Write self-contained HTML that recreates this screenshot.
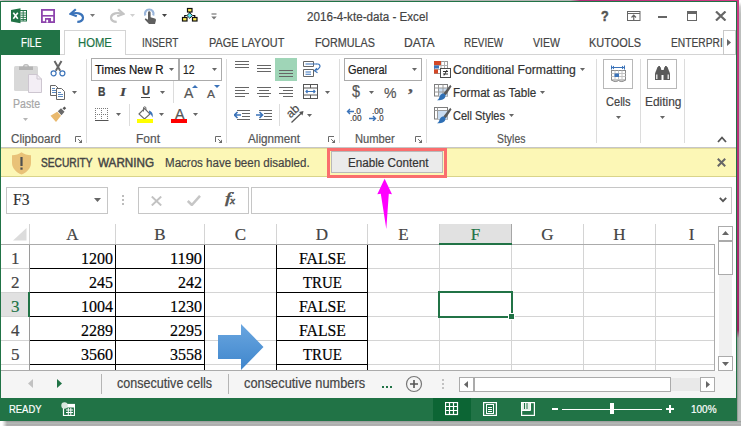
<!DOCTYPE html>
<html lang="en"><head><meta charset="utf-8"><title>2016-4-kte-data - Excel</title>
<style>
html,body{margin:0;padding:0;background:#fff;}
body{width:741px;height:426px;overflow:hidden;font-family:"Liberation Sans",sans-serif;}
#win{position:relative;width:741px;height:426px;overflow:hidden;background:#fff;}
#win div,#win svg,#win span.t{position:absolute;display:block;box-sizing:border-box;}
span.t{white-space:pre;line-height:1;transform-origin:0 50%;-webkit-text-stroke:0.2px currentColor;}
</style></head>
<body>
<div id="win">
<section id="window-frame">
<div style="left:0px;top:0px;width:741px;height:1px;background:linear-gradient(90deg,#d6ccd1 0,#b4b4b4 4px,#b4b4b4 570px,#b52d78 580px,#d63a85 736px,#d63a85 739px,#fff 739px);"></div>
<div style="left:737px;top:0px;width:1px;height:421px;background:linear-gradient(180deg,#c83a82 0,#a3266a 300px,#97245f 330px,#9c9f9d 338px,#98a09b 100%);"></div>
<div style="left:738px;top:0px;width:1px;height:421px;background:linear-gradient(180deg,#c83a82 0,#a3266a 300px,#97245f 330px,#acafad 338px,#b5c0b9 100%);"></div>
<div style="left:739px;top:0px;width:2px;height:421px;background:linear-gradient(180deg,#fff 0,#fff 2px,#cfcfcf 7px,#bcbfbd 14px,#bcbfbd 100%);"></div>
<div style="left:0px;top:421px;width:741px;height:5px;background:linear-gradient(180deg,#a0a0a0 0,#a0a0a0 20%,#adb2af 20%,#adb2af 40%,#b4b8b6 40%,#b4b8b6 60%,#adadad 60%,#adadad 80%,#b0b0b0 80%);"></div>
<div style="left:0px;top:421px;width:7px;height:5px;background:linear-gradient(90deg,#fff 0,#fff 30%,rgba(255,255,255,0) 100%);"></div>
<div style="left:0px;top:1px;width:737px;height:1px;background:#217346;"></div>
<div style="left:0px;top:1px;width:1px;height:420px;background:#217346;"></div>
<div style="left:736px;top:1px;width:1px;height:420px;background:#217346;"></div>
</section>
<header id="titlebar">
<span class="t" style="left:307.00px;top:11.00px;font-size:12.5px;color:#444;transform:scaleX(0.9312);">2016-4-kte-data - Excel</span>
<svg style="left:10px;top:7px;" width="18" height="17" viewBox="0 0 18 17"><rect x="9" y="3.500" width="7.500" height="10.500" fill="#fff" stroke="#217346" stroke-width="1"/>
<path d="M10.500 6H16M10.500 8.200H16M10.500 10.400H16M10.500 12.500H16M13.200 4V14" stroke="#217346" stroke-width=".9" fill="none"/>
<path d="M1 3L10.500 1.200V16.300L1 14.500Z" fill="#217346"/>
<path d="M3.300 5.800L7.800 11.800M7.800 5.800L3.300 11.800" stroke="#fff" stroke-width="1.600" fill="none"/></svg>
<svg style="left:41px;top:9px;" width="14" height="14" viewBox="0 0 14 14"><rect x=".9" y=".9" width="12.200" height="12.200" fill="#fff" stroke="#8e44ad" stroke-width="1.800"/>
<path d="M1 6.800H13" stroke="#8e44ad" stroke-width="1.600"/>
<rect x="4" y="9" width="6" height="4.500" fill="#8e44ad"/><rect x="5.300" y="10.800" width="1.800" height="2.700" fill="#fff"/></svg>
<svg style="left:69px;top:8px;" width="16" height="15" viewBox="0 0 16 15"><path d="M6.800 1.200L1.500 6L7.800 8.300" fill="none" stroke="#3b73b9" stroke-width="2.200"/>
<path d="M2.500 5.800C7 4.200 13.500 5 14 9.500C14.200 12.500 11.500 13.800 8.300 13.800" fill="none" stroke="#3b73b9" stroke-width="2.200"/></svg>
<svg style="left:90px;top:14px;" width="5" height="3" viewBox="0 0 5 3"><path d="M0 0H5L2.5 3Z" fill="#777"/></svg>
<svg style="left:109px;top:8px;" width="16" height="15" viewBox="0 0 16 15"><path d="M9.200 1.200L14.500 6L8.200 8.300" fill="none" stroke="#c4c4c4" stroke-width="2.200"/>
<path d="M13.500 5.800C9 4.200 2.500 5 2 9.500C1.800 12.500 4.500 13.800 7.700 13.800" fill="none" stroke="#c4c4c4" stroke-width="2.200"/></svg>
<svg style="left:130px;top:14px;" width="5" height="3" viewBox="0 0 5 3"><path d="M0 0H5L2.5 3Z" fill="#d0d0d0"/></svg>
<svg style="left:142px;top:7px;" width="16" height="18" viewBox="0 0 16 18"><path d="M3.300 8.500A4.300 4.300 0 1 1 11.200 8.500" fill="none" stroke="#9ab5da" stroke-width="2.200"/>
<path d="M6 5.500a1.300 1.300 0 0 1 2.600 0V10.300l4.200 1.100c1 .3 1.300 1 1.100 2L13 17H7L3 12.800c-.6-.9.400-1.800 1.300-1.100L6 12.800Z" fill="#5f5f5f"/></svg>
<svg style="left:162px;top:14px;" width="5" height="3" viewBox="0 0 5 3"><path d="M0 0H5L2.5 3Z" fill="#444"/></svg>
<svg style="left:181px;top:7px;" width="18" height="16" viewBox="0 0 18 16"><path d="M8.750 5V6M5.750 8.500H3.750V10.500M11.750 8.500H13.750V10.500" fill="none" stroke="#111" stroke-width="1.200"/>
<path d="M8.750 5.700L11.550 8.500L8.750 11.300L5.950 8.500Z" fill="#5fe8f0" stroke="#111" stroke-width=".9"/>
<rect x="6.500" y="1.500" width="4.500" height="3.500" fill="#ffee55" stroke="#111" stroke-width="1.200"/>
<rect x="1.500" y="10.500" width="4.500" height="3.500" fill="#ffee55" stroke="#111" stroke-width="1.200"/>
<rect x="11.500" y="10.500" width="4.500" height="3.500" fill="#ffee55" stroke="#111" stroke-width="1.200"/></svg>
<svg style="left:211px;top:13px;" width="6" height="8" viewBox="0 0 6 8"><path d="M.5 1H5.500" stroke="#777" stroke-width="1.200"/><path d="M.3 3.500H5.700L3 6.500Z" fill="#777"/></svg>
<span class="t" style="left:600.80px;top:8.50px;font-size:14px;color:#555;font-weight:700;-webkit-text-stroke:0.5px #555;transform:scaleX(0.8993);">?</span>
<svg style="left:627px;top:11px;" width="14" height="10" viewBox="0 0 14 10"><rect x=".5" y=".5" width="12.500" height="9" fill="none" stroke="#666"/><path d="M0 2.500H13" stroke="#666"/><path d="M6.750 9V4.500M4.500 6.500L6.750 4.200L9 6.500" fill="none" stroke="#666" stroke-width="1.200"/></svg>
<div style="left:658px;top:16px;width:9px;height:2px;background:#666;"></div>
<div style="left:687px;top:11px;width:10px;height:10px;border:1px solid #666;border-top-width:3px;"></div>
<svg style="left:715px;top:11px;" width="12" height="10" viewBox="0 0 12 10"><path d="M1 .5L10.500 9.500M10.500 .5L1 9.500" stroke="#666" stroke-width="2.200"/></svg>
</header>
<nav id="ribbon-tabs">
<div style="left:1px;top:30px;width:59px;height:25px;background:#217346;"></div>
<span class="t" style="left:20.50px;top:37.00px;font-size:12.5px;color:#fff;transform:scaleX(0.7763);">FILE</span>
<div style="left:60px;top:54px;width:676px;height:1px;background:#d4d4d4;"></div>
<div style="left:64px;top:30px;width:62px;height:25px;background:#fff;border:1px solid #d4d4d4;border-bottom:none;"></div>
<span class="t" style="left:77.70px;top:37.00px;font-size:12.5px;color:#217346;transform:scaleX(0.9040);">HOME</span>
<span class="t" style="left:141.60px;top:37.00px;font-size:12.5px;color:#444444;transform:scaleX(0.7978);">INSERT</span>
<span class="t" style="left:208.60px;top:37.00px;font-size:12.5px;color:#444444;transform:scaleX(0.8729);">PAGE LAYOUT</span>
<span class="t" style="left:315.00px;top:37.00px;font-size:12.5px;color:#444444;transform:scaleX(0.8639);">FORMULAS</span>
<span class="t" style="left:404.40px;top:37.00px;font-size:12.5px;color:#444444;transform:scaleX(0.9719);">DATA</span>
<span class="t" style="left:464.40px;top:37.00px;font-size:12.5px;color:#444444;transform:scaleX(0.7949);">REVIEW</span>
<span class="t" style="left:533.00px;top:37.00px;font-size:12.5px;color:#444444;transform:scaleX(0.8450);">VIEW</span>
<span class="t" style="left:589.40px;top:37.00px;font-size:12.5px;color:#444444;transform:scaleX(0.8737);">KUTOOLS</span>
<span class="t" style="left:670.50px;top:37.00px;font-size:12.5px;color:#444444;transform:scaleX(0.8199);">ENTERPRISE</span>
<div style="left:723px;top:30px;width:13px;height:25px;background:#fff;border:1px solid #c8c8c8;"></div>
<svg style="left:727px;top:39px;" width="4" height="7" viewBox="0 0 4 7"><path d="M0 0L4 3.500L0 7Z" fill="#666"/></svg>
</nav>
<section id="ribbon">
<div style="left:1px;top:147px;width:735px;height:1px;background:#c6c6c6;"></div>
<div style="left:86px;top:59px;width:1px;height:84px;background:#dcdcdc;"></div>
<div style="left:226px;top:59px;width:1px;height:84px;background:#dcdcdc;"></div>
<div style="left:339px;top:59px;width:1px;height:84px;background:#dcdcdc;"></div>
<div style="left:426px;top:59px;width:1px;height:84px;background:#dcdcdc;"></div>
<div style="left:596px;top:59px;width:1px;height:84px;background:#dcdcdc;"></div>
<div style="left:640px;top:59px;width:1px;height:84px;background:#dcdcdc;"></div>
<div style="left:684px;top:59px;width:1px;height:84px;background:#dcdcdc;"></div>
<svg style="left:14px;top:62px;" width="29" height="32" viewBox="0 0 29 32"><rect x="0" y="4" width="24" height="25" rx="1.500" fill="#d8d8d8"/>
<path d="M5 8V4.500H8.800A3.300 3.300 0 0 1 15.200 4.500H19V8Z" fill="#b4b4b4"/><rect x="10.500" y="2.800" width="3" height="1.700" fill="#d8d8d8"/>
<path d="M14.500 12.500H23L27.500 17V30.500H14.500Z" fill="#f3eef5" stroke="#cdc6d0" stroke-width="1"/>
<path d="M23 12.500V17H27.500" fill="none" stroke="#cdc6d0" stroke-width="1"/></svg>
<span class="t" style="left:13.00px;top:98.00px;font-size:12.5px;color:#a6a6a6;transform:scaleX(0.8446);">Paste</span>
<svg style="left:23px;top:118px;" width="5" height="3" viewBox="0 0 5 3"><path d="M0 0H5L2.5 3Z" fill="#b5b5b5"/></svg>
<svg style="left:50px;top:60px;" width="16" height="17" viewBox="0 0 16 17"><path d="M4.500 1L10.200 10.800M11.500 1L5.800 10.800" stroke="#666" stroke-width="2" fill="none"/>
<circle cx="3.600" cy="13.300" r="2.500" fill="#fff" stroke="#3b73b9" stroke-width="1.200"/><circle cx="12.400" cy="13.300" r="2.500" fill="#fff" stroke="#3b73b9" stroke-width="1.200"/></svg>
<svg style="left:49px;top:85px;" width="17" height="15" viewBox="0 0 17 15"><path d="M1.500 .5H6.500L9.500 3.500V10.500H1.500Z" fill="#fff" stroke="#666" stroke-width="1"/>
<path d="M3 3.500H6M3 5.500H7M3 7.500H7" stroke="#4a7ebb" stroke-width=".9"/>
<path d="M7.500 3.500H12.500L15.500 6.500V14.500H7.500Z" fill="#fff" stroke="#666" stroke-width="1"/>
<path d="M9 7.500H12M9 9.500H14M9 11.500H14" stroke="#4a7ebb" stroke-width=".9"/></svg>
<svg style="left:72px;top:91px;" width="5" height="3" viewBox="0 0 5 3"><path d="M0 0H5L2.5 3Z" fill="#666"/></svg>
<svg style="left:50px;top:106px;" width="17" height="17" viewBox="0 0 17 17"><path d="M.5 9.800L7.200 5.800L11 9.800L6 16Z" fill="#e9b96e"/>
<path d="M7.800 5.200L11 2.300L14.500 5.800L11.500 9.200Z" fill="#6a6a6a"/><path d="M12.500 2.300L14.500 .5L16.200 2.200L14.300 4Z" fill="#555"/></svg>
<span class="t" style="left:10.60px;top:133.00px;font-size:12.5px;color:#555;transform:scaleX(0.9306);">Clipboard</span>
<svg style="left:75px;top:136px;" width="7" height="7" viewBox="0 0 7 7"><path d="M.5 6V.5H6" fill="none" stroke="#6a6a6a" stroke-width="1"/><path d="M3.200 3.200L5.500 5.500" stroke="#6a6a6a" stroke-width="1"/><path d="M7 3.600V7H3.600Z" fill="#6a6a6a"/></svg>
<div style="left:91px;top:58px;width:88px;height:23px;background:#fff;border:1px solid #ababab;"></div>
<div style="left:179px;top:58px;width:43px;height:23px;background:#fff;border:1px solid #ababab;"></div>
<span class="t" style="left:94.50px;top:64.00px;font-size:12.5px;color:#111;transform:scaleX(0.9189);">Times New R</span>
<svg style="left:169px;top:68px;" width="5" height="3" viewBox="0 0 5 3"><path d="M0 0H5L2.5 3Z" fill="#666"/></svg>
<span class="t" style="left:182.50px;top:64.00px;font-size:12.5px;color:#222;transform:scaleX(0.8270);">12</span>
<svg style="left:212px;top:68px;" width="5" height="3" viewBox="0 0 5 3"><path d="M0 0H5L2.5 3Z" fill="#666"/></svg>
<span class="t" style="left:97.50px;top:85.50px;font-size:12.5px;color:#444;font-weight:700;transform:scaleX(0.8304);">B</span>
<span class="t" style="left:120.00px;top:85.50px;font-size:12.5px;color:#444;font-family:'Liberation Serif',serif;font-weight:700;font-style:italic;transform:scaleX(1.2308);">I</span>
<span class="t" style="left:141.50px;top:85.00px;font-size:12.5px;color:#444;font-weight:700;transform:scaleX(0.8858);">U</span>
<div style="left:141px;top:97px;width:9px;height:1px;background:#444;"></div>
<svg style="left:160px;top:91px;" width="5" height="3" viewBox="0 0 5 3"><path d="M0 0H5L2.5 3Z" fill="#666"/></svg>
<div style="left:173px;top:81px;width:1px;height:22px;background:#dcdcdc;"></div>
<span class="t" style="left:184.20px;top:86.00px;font-size:14.3px;color:#555;transform:scaleX(0.9846);">A</span>
<svg style="left:192px;top:85px;" width="6" height="3" viewBox="0 0 6 3"><path d="M0 3H6L3 0Z" fill="#3b73b9"/></svg>
<span class="t" style="left:207.00px;top:89.00px;font-size:10.5px;color:#555;transform:scaleX(1.1403);">A</span>
<svg style="left:214px;top:85px;" width="6" height="3" viewBox="0 0 6 3"><path d="M0 0H6L3 3Z" fill="#3b73b9"/></svg>
<svg style="left:95px;top:108px;" width="14" height="14" viewBox="0 0 14 14"><path d="M0 .5H13M0 6.500H13" stroke="#7a7a7a" stroke-width="1" stroke-dasharray="1 1" fill="none"/>
<path d="M.5 0V12M6.500 0V12M12.500 0V12" stroke="#7a7a7a" stroke-width="1" stroke-dasharray="1 1" fill="none"/>
<path d="M0 12.500H13.500" stroke="#555" stroke-width="1"/></svg>
<svg style="left:116px;top:113px;" width="5" height="3" viewBox="0 0 5 3"><path d="M0 0H5L2.5 3Z" fill="#666"/></svg>
<div style="left:129px;top:104px;width:1px;height:22px;background:#dcdcdc;"></div>
<svg style="left:136px;top:106px;" width="18" height="17" viewBox="0 0 18 17"><path d="M3 8L8.500 2.500L14 8L8.500 13Z" fill="#fff" stroke="#6a6a6a" stroke-width="1.100"/>
<path d="M7.500 5.500V2a1.200 1.200 0 0 1 2.400 0V4" fill="none" stroke="#6a6a6a" stroke-width="1"/>
<path d="M13 4.500C16 5.500 17.500 8 16.500 11.500C15.800 9.500 14.800 8.300 13.200 7.300Z" fill="#3b73b9"/>
<rect x="1" y="13" width="16" height="4" fill="#ffff00"/></svg>
<svg style="left:159px;top:113px;" width="5" height="3" viewBox="0 0 5 3"><path d="M0 0H5L2.5 3Z" fill="#666"/></svg>
<span class="t" style="left:174.50px;top:107.00px;font-size:14px;color:#555;transform:scaleX(1.0167);">A</span>
<div style="left:171px;top:119px;width:16px;height:4px;background:#ff0000;"></div>
<svg style="left:193px;top:113px;" width="5" height="3" viewBox="0 0 5 3"><path d="M0 0H5L2.5 3Z" fill="#666"/></svg>
<span class="t" style="left:136.00px;top:133.00px;font-size:12.5px;color:#555;transform:scaleX(0.9594);">Font</span>
<svg style="left:215px;top:136px;" width="7" height="7" viewBox="0 0 7 7"><path d="M.5 6V.5H6" fill="none" stroke="#6a6a6a" stroke-width="1"/><path d="M3.200 3.200L5.500 5.500" stroke="#6a6a6a" stroke-width="1"/><path d="M7 3.600V7H3.600Z" fill="#6a6a6a"/></svg>
<div style="left:275px;top:58px;width:22px;height:23px;background:#9fd5b7;"></div>
<svg style="left:235px;top:58px;" width="64" height="24" viewBox="0 0 64 24"><rect x="0" y="3" width="14" height="1" fill="#666"/><rect x="0" y="6" width="14" height="1" fill="#666"/><rect x="0" y="9" width="14" height="1" fill="#666"/><rect x="22" y="7" width="14" height="1" fill="#666"/><rect x="22" y="10" width="14" height="1" fill="#666"/><rect x="22" y="13" width="14" height="1" fill="#666"/><rect x="44" y="12" width="14" height="1" fill="#666"/><rect x="44" y="15" width="14" height="1" fill="#666"/><rect x="44" y="18" width="14" height="1" fill="#666"/></svg>
<svg style="left:235px;top:84px;" width="64" height="16" viewBox="0 0 64 16"><rect x="0" y="3" width="14" height="1" fill="#666"/><rect x="0" y="6" width="10" height="1" fill="#666"/><rect x="0" y="9" width="14" height="1" fill="#666"/><rect x="0" y="12" width="10" height="1" fill="#666"/><rect x="22" y="3" width="14" height="1" fill="#666"/><rect x="24" y="6" width="10" height="1" fill="#666"/><rect x="22" y="9" width="14" height="1" fill="#666"/><rect x="24" y="12" width="10" height="1" fill="#666"/><rect x="44" y="3" width="14" height="1" fill="#666"/><rect x="48" y="6" width="10" height="1" fill="#666"/><rect x="44" y="9" width="14" height="1" fill="#666"/><rect x="48" y="12" width="10" height="1" fill="#666"/></svg>
<svg style="left:303px;top:60px;" width="18" height="17" viewBox="0 0 18 17"><path d="M.5 1.500H10.500V6.500H.5Z" fill="#fff" stroke="#666"/><path d="M.5 9.500H10.500V16.500H.5Z" fill="#fff" stroke="#666"/>
<path d="M2.500 4H14M2.500 12H8M2.500 14.200H8" stroke="#3b73b9" stroke-width="1.100"/>
<path d="M13.500 4H14.500a2.200 2.200 0 0 1 2 3.500C15.500 9.500 14 10.200 12 10.500M14 8.200L11.500 10.700L14.500 12.800" fill="none" stroke="#3b73b9" stroke-width="1.200"/></svg>
<svg style="left:303px;top:84px;" width="16" height="16" viewBox="0 0 16 16"><rect x=".5" y=".5" width="14" height="14" fill="#fff" stroke="#555"/>
<path d="M.5 4H14.500M.5 11H14.500M7.500 .5V4M7.500 11V14.500" stroke="#555" fill="none"/>
<path d="M3 7.500H12M4.500 6L3 7.500L4.500 9M10.500 6L12 7.500L10.500 9" stroke="#3b73b9" stroke-width="1.200" fill="none"/></svg>
<svg style="left:325px;top:91px;" width="5" height="3" viewBox="0 0 5 3"><path d="M0 0H5L2.5 3Z" fill="#666"/></svg>
<svg style="left:234px;top:109px;" width="17" height="12" viewBox="0 0 17 12"><path d="M3 1.500H16M8 4.500H16M8 7.500H16M3 10.500H16" stroke="#666" stroke-width="1" fill="none"/><path d="M7 6H.5M3.500 3L.5 6L3.500 9" fill="none" stroke="#3b73b9" stroke-width="1.600"/></svg>
<svg style="left:256px;top:109px;" width="17" height="12" viewBox="0 0 17 12"><path d="M3 1.500H16M8 4.500H16M8 7.500H16M3 10.500H16" stroke="#666" stroke-width="1" fill="none"/><path d="M0 6H6.500M3.500 3L6.500 6L3.500 9" fill="none" stroke="#3b73b9" stroke-width="1.600"/></svg>
<div style="left:279px;top:104px;width:1px;height:22px;background:#dcdcdc;"></div>
<span class="t" style="left:285.500px;top:104.500px;font-size:12px;color:#4a4a4a;transform:rotate(-42deg);transform-origin:50% 50%;">ab</span>
<svg style="left:288px;top:106px;" width="17" height="18" viewBox="0 0 17 18"><path d="M3.500 16.500L14 6.500" stroke="#555" stroke-width="1.300"/><path d="M15.500 5L11 6L14.500 9.500Z" fill="#555"/></svg>
<svg style="left:307px;top:114px;" width="5" height="3" viewBox="0 0 5 3"><path d="M0 0H5L2.5 3Z" fill="#666"/></svg>
<span class="t" style="left:247.50px;top:133.00px;font-size:12.5px;color:#555;transform:scaleX(0.9354);">Alignment</span>
<svg style="left:328px;top:136px;" width="7" height="7" viewBox="0 0 7 7"><path d="M.5 6V.5H6" fill="none" stroke="#6a6a6a" stroke-width="1"/><path d="M3.200 3.200L5.500 5.500" stroke="#6a6a6a" stroke-width="1"/><path d="M7 3.600V7H3.600Z" fill="#6a6a6a"/></svg>
<div style="left:344px;top:58px;width:78px;height:23px;background:#fff;border:1px solid #ababab;"></div>
<span class="t" style="left:348.00px;top:64.00px;font-size:12.5px;color:#222;transform:scaleX(0.8767);">General</span>
<svg style="left:412px;top:68px;" width="5" height="3" viewBox="0 0 5 3"><path d="M0 0H5L2.5 3Z" fill="#666"/></svg>
<span class="t" style="left:351.50px;top:84.00px;font-size:16px;color:#555;transform:scaleX(0.8982);">$</span>
<svg style="left:369px;top:91px;" width="5" height="3" viewBox="0 0 5 3"><path d="M0 0H5L2.5 3Z" fill="#666"/></svg>
<span class="t" style="left:383.50px;top:84.50px;font-size:15px;color:#555;transform:scaleX(0.9368);">%</span>
<span class="t" style="left:407.50px;top:77.50px;font-size:17.5px;color:#555;font-family:'Liberation Serif',serif;font-weight:700;transform:scaleX(1.1429);">,</span>
<svg style="left:346px;top:107px;" width="17" height="14" viewBox="0 0 17 14"><path d="M1.500 4.500H8M4 2L1.500 4.500L4 7" fill="none" stroke="#3b73b9" stroke-width="1.400"/></svg>
<span class="t" style="left:354.30px;top:106.50px;font-size:8.5px;color:#444;transform:scaleX(0.9868);">.0</span>
<span class="t" style="left:349.70px;top:114.00px;font-size:8.5px;color:#444;transform:scaleX(0.9807);">.00</span>
<svg style="left:368px;top:107px;" width="17" height="14" viewBox="0 0 17 14"><path d="M1 11.500H7.500M5 9L7.500 11.500L5 14" fill="none" stroke="#3b73b9" stroke-width="1.400"/></svg>
<span class="t" style="left:371.80px;top:106.50px;font-size:8.5px;color:#444;transform:scaleX(0.9554);">.00</span>
<span class="t" style="left:376.50px;top:114.00px;font-size:8.5px;color:#444;transform:scaleX(0.9304);">.0</span>
<span class="t" style="left:354.70px;top:133.00px;font-size:12.5px;color:#555;transform:scaleX(0.8928);">Number</span>
<svg style="left:415px;top:136px;" width="7" height="7" viewBox="0 0 7 7"><path d="M.5 6V.5H6" fill="none" stroke="#6a6a6a" stroke-width="1"/><path d="M3.200 3.200L5.500 5.500" stroke="#6a6a6a" stroke-width="1"/><path d="M7 3.600V7H3.600Z" fill="#6a6a6a"/></svg>
<svg style="left:434px;top:61px;" width="17" height="17" viewBox="0 0 17 17"><rect x=".5" y=".5" width="13" height="12" fill="#fff" stroke="#9a9a9a"/>
<path d="M.5 4.500H13.500M.5 8.500H13.500M7 .5V12M10.500 .5V12" stroke="#b0b0b0" fill="none"/>
<rect x="0" y="0" width="7" height="4" fill="#d24726"/><rect x="0" y="4.500" width="5" height="3" fill="#3b73b9"/><rect x="0" y="8.500" width="4" height="4" fill="#d24726"/>
<rect x="6.500" y="7.500" width="10" height="9" fill="#fff" stroke="#4a4a4a"/><path d="M9 10.500H14M9 13H14M13 9L10 14.500" stroke="#333" stroke-width="1" fill="none"/></svg>
<span class="t" style="left:453.30px;top:64.00px;font-size:12.5px;color:#333;transform:scaleX(0.9772);">Conditional Formatting</span>
<svg style="left:580px;top:68px;" width="5" height="3" viewBox="0 0 5 3"><path d="M0 0H5L2.5 3Z" fill="#666"/></svg>
<svg style="left:434px;top:84px;" width="18" height="17" viewBox="0 0 18 17"><rect x=".5" y=".5" width="13" height="11.500" fill="#fff" stroke="#7d7d7d"/><rect x="4.500" y="4" width="9" height="8" fill="#c9dcf1"/><path d="M.5 4H13.500M.5 8H13.500M4.500 .5V12M9 .5V12" stroke="#9a9a9a" stroke-width="1" fill="none"/>
<path d="M16.300 .8L17.500 2.500L11.800 11.200L9.300 9.500Z" fill="#5a5a5a"/>
<path d="M9.300 9.600C11.800 9.800 12.300 12.500 10.300 14.500C8.300 16.400 5 16.300 3 16.300C5.500 15 5 13 6.300 11.200C7.100 10.100 8.200 9.600 9.300 9.600Z" fill="#2e6fb5"/></svg>
<span class="t" style="left:453.30px;top:87.00px;font-size:12.5px;color:#333;transform:scaleX(0.9306);">Format as Table</span>
<svg style="left:540px;top:91px;" width="5" height="3" viewBox="0 0 5 3"><path d="M0 0H5L2.5 3Z" fill="#666"/></svg>
<svg style="left:434px;top:107px;" width="18" height="17" viewBox="0 0 18 17"><rect x=".5" y=".5" width="13" height="11.500" fill="#fff" stroke="#7d7d7d"/><rect x="4" y="4" width="9.500" height="8" fill="#c9dcf1"/><path d="M.5 3.500H13.500M3.500 .5V12" stroke="#9a9a9a" stroke-width="1" fill="none"/>
<path d="M16.300 .8L17.500 2.500L11.800 11.200L9.300 9.500Z" fill="#5a5a5a"/>
<path d="M9.300 9.600C11.800 9.800 12.300 12.500 10.300 14.500C8.300 16.400 5 16.300 3 16.300C5.500 15 5 13 6.300 11.200C7.100 10.100 8.200 9.600 9.300 9.600Z" fill="#2e6fb5"/></svg>
<span class="t" style="left:453.30px;top:110.00px;font-size:12.5px;color:#333;transform:scaleX(0.8807);">Cell Styles</span>
<svg style="left:509px;top:114px;" width="5" height="3" viewBox="0 0 5 3"><path d="M0 0H5L2.5 3Z" fill="#666"/></svg>
<span class="t" style="left:497.00px;top:133.00px;font-size:12.5px;color:#555;transform:scaleX(0.8341);">Styles</span>
<div style="left:603px;top:59px;width:30px;height:30px;background:#fff;border:1px solid #b8b8b8;"></div>
<svg style="left:610px;top:64px;" width="16" height="19" viewBox="0 0 16 19"><path d="M2 3.500H14M1.500 1.500V5.500M14.500 1.500V5.500M4 2L2.300 3.500L4 5M12 2L13.700 3.500L12 5" stroke="#3b73b9" stroke-width="1" fill="none"/>
<rect x="1.500" y="6.500" width="14" height="9.500" fill="#fff" stroke="#8a8a8a"/><path d="M1.500 9.500H15.500M1.500 12.500H15.500M5 6.500V16M8.500 6.500V16M12 6.500V16" stroke="#c4c4c4" fill="none"/>
<rect x="4.500" y="9.500" width="4.500" height="3.500" fill="#3b73b9"/>
<path d="M1.500 16C4 18 6.500 18 8.500 16.500C10.500 18 13 18 15.500 16" fill="none" stroke="#8a8a8a"/></svg>
<span class="t" style="left:606.40px;top:96.00px;font-size:12.5px;color:#444;transform:scaleX(0.8850);">Cells</span>
<svg style="left:616px;top:116px;" width="5" height="3" viewBox="0 0 5 3"><path d="M0 0H5L2.5 3Z" fill="#666"/></svg>
<div style="left:647px;top:59px;width:30px;height:30px;background:#fff;border:1px solid #b8b8b8;"></div>
<svg style="left:654px;top:66px;" width="17" height="15" viewBox="0 0 17 15"><path d="M3.500 1H6.500L7.500 4.500V14H1V7.500Z" fill="#5a5a5a"/><path d="M13.500 1H10.500L9.500 4.500V14H16V7.500Z" fill="#5a5a5a"/>
<rect x="7" y="4" width="3" height="5" fill="#5a5a5a"/><rect x="4.200" y="0" width="1.800" height="1.500" fill="#5a5a5a"/><rect x="11" y="0" width="1.800" height="1.500" fill="#5a5a5a"/>
<rect x="2" y="8.500" width="1.500" height="4.500" fill="#dcdcdc"/><rect x="13.500" y="8.500" width="1.500" height="4.500" fill="#dcdcdc"/></svg>
<span class="t" style="left:644.60px;top:96.00px;font-size:12.5px;color:#444;transform:scaleX(0.9520);">Editing</span>
<svg style="left:660px;top:116px;" width="5" height="3" viewBox="0 0 5 3"><path d="M0 0H5L2.5 3Z" fill="#666"/></svg>
<svg style="left:717px;top:136px;" width="10" height="7" viewBox="0 0 10 7"><path d="M1 6L5 1.500L9 6" fill="none" stroke="#555" stroke-width="1.800"/></svg>
</section>
<section id="security-bar">
<div style="left:1px;top:148px;width:735px;height:29px;background:#fcf7b6;border-bottom:1px solid #d9d48a;border-top:1px solid #e3dd98;"></div>
<svg style="left:11px;top:152px;" width="21" height="23" viewBox="0 0 21 23"><path d="M10.500 .3C8 2.300 4.500 3.300 1 3.300V11C1 16.500 5.500 20.500 10.500 22.500C15.500 20.500 20 16.500 20 11V3.300C16.500 3.300 13 2.300 10.500 .3Z" fill="#e9c278"/>
<rect x="9.400" y="5" width="2.200" height="9" fill="#505050"/><rect x="9.400" y="15.500" width="2.200" height="2.200" fill="#505050"/></svg>
<span class="t" style="left:41.00px;top:157.00px;font-size:12.5px;color:#444;-webkit-text-stroke:0.45px #444;transform:scaleX(0.8148);">SECURITY</span>
<span class="t" style="left:98.00px;top:157.00px;font-size:12.5px;color:#444;-webkit-text-stroke:0.45px #444;transform:scaleX(0.9341);">WARNING</span>
<span class="t" style="left:165.00px;top:157.00px;font-size:12.5px;color:#444;transform:scaleX(0.9248);">Macros have been disabled.</span>
<div style="left:327px;top:148px;width:120px;height:30px;background:#fcf7b6;border:3px solid #fa6e6e;"></div>
<div style="left:331px;top:151px;width:112px;height:22px;background:#ebebeb;border:1px solid #b9b9b9;"></div>
<span class="t" style="left:347.50px;top:157.00px;font-size:12.5px;color:#333;transform:scaleX(0.9340);">Enable Content</span>
<svg style="left:717px;top:158px;" width="9" height="9" viewBox="0 0 9 9"><path d="M.8 .8L8.200 8.200M8.200 .8L.8 8.200" stroke="#666" stroke-width="2"/></svg>
</section>
<section id="formula-bar">
<div style="left:6px;top:187px;width:102px;height:27px;background:#fff;border:1px solid #c6c6c6;"></div>
<span class="t" style="left:13.00px;top:191.50px;font-size:16px;color:#333;font-family:'Liberation Serif',serif;transform:scaleX(0.9760);">F3</span>
<svg style="left:94px;top:198px;" width="7" height="4" viewBox="0 0 7 4"><path d="M0 0H7L3.5 4Z" fill="#666"/></svg>
<div style="left:122px;top:195px;width:2px;height:2px;background:#bdbdbd;"></div>
<div style="left:122px;top:199px;width:2px;height:2px;background:#bdbdbd;"></div>
<div style="left:122px;top:203px;width:2px;height:2px;background:#bdbdbd;"></div>
<div style="left:138px;top:187px;width:111px;height:27px;background:#fff;border:1px solid #c6c6c6;"></div>
<svg style="left:151px;top:196px;" width="11" height="10" viewBox="0 0 11 10"><path d="M.8 .5L10.200 9.500M10.200 .5L.8 9.500" stroke="#c2c2c2" stroke-width="1.900"/></svg>
<svg style="left:187px;top:195px;" width="14" height="11" viewBox="0 0 14 11"><path d="M.8 6L4.800 10L13 .8" fill="none" stroke="#c6c6c6" stroke-width="2.500"/></svg>
<span class="t" style="left:224.50px;top:191.50px;font-size:14px;color:#555;font-family:'Liberation Serif',serif;font-style:italic;-webkit-text-stroke:0.5px #555;transform:scaleX(1.5422);">f</span>
<span class="t" style="left:229.50px;top:196.00px;font-size:10px;color:#555;font-family:'Liberation Serif',serif;font-style:italic;-webkit-text-stroke:0.5px #555;transform:scaleX(1.1228);">x</span>
<div style="left:251px;top:187px;width:481px;height:27px;background:#fff;border:1px solid #c6c6c6;"></div>
<svg style="left:719px;top:197px;" width="8" height="6" viewBox="0 0 8 6"><path d="M.8 .8L4 4.200L7.200 .8" fill="none" stroke="#555" stroke-width="1.800"/></svg>
<svg style="left:376px;top:178px;" width="18" height="53" viewBox="0 0 18 53"><path d="M8.600 .8L16 16.300L12.800 15.700L10.300 51L4.800 15.700L1.300 16.300Z" fill="#ff00ff"/></svg>
</section>
<main id="grid">
<div style="left:439px;top:224px;width:73px;height:20px;background:#e1e1e1;"></div>
<div style="left:1px;top:293px;width:28px;height:23px;background:#e1e1e1;"></div>
<div style="left:1px;top:268px;width:714px;height:1px;background:#d4d4d4;"></div>
<div style="left:1px;top:292px;width:714px;height:1px;background:#d4d4d4;"></div>
<div style="left:1px;top:316px;width:714px;height:1px;background:#d4d4d4;"></div>
<div style="left:1px;top:340px;width:714px;height:1px;background:#d4d4d4;"></div>
<div style="left:1px;top:364px;width:714px;height:1px;background:#d4d4d4;"></div>
<div style="left:29px;top:224px;width:1px;height:146px;background:#d4d4d4;"></div>
<div style="left:115px;top:224px;width:1px;height:146px;background:#d4d4d4;"></div>
<div style="left:204px;top:224px;width:1px;height:146px;background:#d4d4d4;"></div>
<div style="left:276px;top:224px;width:1px;height:146px;background:#d4d4d4;"></div>
<div style="left:367px;top:224px;width:1px;height:146px;background:#d4d4d4;"></div>
<div style="left:439px;top:224px;width:1px;height:146px;background:#d4d4d4;"></div>
<div style="left:511px;top:224px;width:1px;height:146px;background:#d4d4d4;"></div>
<div style="left:583px;top:224px;width:1px;height:146px;background:#d4d4d4;"></div>
<div style="left:655px;top:224px;width:1px;height:146px;background:#d4d4d4;"></div>
<div style="left:1px;top:244px;width:714px;height:1px;background:#ababab;"></div>
<div style="left:29px;top:245px;width:1px;height:125px;background:#ababab;"></div>
<div style="left:714px;top:245px;width:1px;height:125px;background:#ababab;"></div>
<div style="left:1px;top:370px;width:714px;height:1px;background:#ababab;"></div>
<svg style="left:13px;top:228px;" width="14" height="13" viewBox="0 0 14 13"><path d="M13.500 0V12.500H0Z" fill="#dcdcdc"/></svg>
<span class="t" style="left:66.36px;top:226.00px;font-size:17px;color:#444;font-family:'Liberation Serif',serif;">A</span>
<span class="t" style="left:154.33px;top:226.00px;font-size:17px;color:#444;font-family:'Liberation Serif',serif;">B</span>
<span class="t" style="left:234.83px;top:226.00px;font-size:17px;color:#444;font-family:'Liberation Serif',serif;">C</span>
<span class="t" style="left:315.86px;top:226.00px;font-size:17px;color:#444;font-family:'Liberation Serif',serif;">D</span>
<span class="t" style="left:398.31px;top:226.00px;font-size:17px;color:#444;font-family:'Liberation Serif',serif;">E</span>
<span class="t" style="left:470.77px;top:226.00px;font-size:17px;color:#217346;font-family:'Liberation Serif',serif;">F</span>
<span class="t" style="left:541.36px;top:226.00px;font-size:17px;color:#444;font-family:'Liberation Serif',serif;">G</span>
<span class="t" style="left:613.36px;top:226.00px;font-size:17px;color:#444;font-family:'Liberation Serif',serif;">H</span>
<span class="t" style="left:688.67px;top:226.00px;font-size:17px;color:#444;font-family:'Liberation Serif',serif;">I</span>
<div style="left:511px;top:224px;width:1px;height:19px;background:#a6a6a6;"></div>
<div style="left:439px;top:243px;width:73px;height:2px;background:#217346;"></div>
<span class="t" style="left:10.95px;top:250.00px;font-size:17px;color:#444;font-family:'Liberation Serif',serif;">1</span>
<span class="t" style="left:10.95px;top:274.00px;font-size:17px;color:#444;font-family:'Liberation Serif',serif;">2</span>
<span class="t" style="left:10.95px;top:298.00px;font-size:17px;color:#217346;font-family:'Liberation Serif',serif;">3</span>
<span class="t" style="left:10.95px;top:322.00px;font-size:17px;color:#444;font-family:'Liberation Serif',serif;">4</span>
<span class="t" style="left:10.95px;top:346.00px;font-size:17px;color:#444;font-family:'Liberation Serif',serif;">5</span>
<div style="left:29px;top:268px;width:176px;height:1px;background:#000;"></div>
<div style="left:276px;top:268px;width:92px;height:1px;background:#000;"></div>
<span class="t" style="left:81.00px;top:250.00px;font-size:17px;color:#000;font-family:'Liberation Serif',serif;transform:scaleX(0.9412);">1200</span>
<span class="t" style="left:170.00px;top:250.00px;font-size:17px;color:#000;font-family:'Liberation Serif',serif;transform:scaleX(0.9588);">1190</span>
<span class="t" style="left:298.80px;top:250.00px;font-size:17px;color:#000;font-family:'Liberation Serif',serif;transform:scaleX(0.9270);">FALSE</span>
<div style="left:29px;top:292px;width:176px;height:1px;background:#000;"></div>
<div style="left:276px;top:292px;width:92px;height:1px;background:#000;"></div>
<span class="t" style="left:89.00px;top:274.00px;font-size:17px;color:#000;font-family:'Liberation Serif',serif;transform:scaleX(0.9412);">245</span>
<span class="t" style="left:178.00px;top:274.00px;font-size:17px;color:#000;font-family:'Liberation Serif',serif;transform:scaleX(0.9412);">242</span>
<span class="t" style="left:302.80px;top:274.00px;font-size:17px;color:#000;font-family:'Liberation Serif',serif;transform:scaleX(0.8786);">TRUE</span>
<div style="left:29px;top:316px;width:176px;height:1px;background:#000;"></div>
<div style="left:276px;top:316px;width:92px;height:1px;background:#000;"></div>
<span class="t" style="left:81.00px;top:298.00px;font-size:17px;color:#000;font-family:'Liberation Serif',serif;transform:scaleX(0.9412);">1004</span>
<span class="t" style="left:170.00px;top:298.00px;font-size:17px;color:#000;font-family:'Liberation Serif',serif;transform:scaleX(0.9412);">1230</span>
<span class="t" style="left:298.80px;top:298.00px;font-size:17px;color:#000;font-family:'Liberation Serif',serif;transform:scaleX(0.9270);">FALSE</span>
<div style="left:29px;top:340px;width:176px;height:1px;background:#000;"></div>
<div style="left:276px;top:340px;width:92px;height:1px;background:#000;"></div>
<span class="t" style="left:81.00px;top:322.00px;font-size:17px;color:#000;font-family:'Liberation Serif',serif;transform:scaleX(0.9412);">2289</span>
<span class="t" style="left:170.00px;top:322.00px;font-size:17px;color:#000;font-family:'Liberation Serif',serif;transform:scaleX(0.9412);">2295</span>
<span class="t" style="left:298.80px;top:322.00px;font-size:17px;color:#000;font-family:'Liberation Serif',serif;transform:scaleX(0.9270);">FALSE</span>
<div style="left:29px;top:364px;width:176px;height:1px;background:#000;"></div>
<div style="left:276px;top:364px;width:92px;height:1px;background:#000;"></div>
<span class="t" style="left:81.00px;top:346.00px;font-size:17px;color:#000;font-family:'Liberation Serif',serif;transform:scaleX(0.9412);">3560</span>
<span class="t" style="left:170.00px;top:346.00px;font-size:17px;color:#000;font-family:'Liberation Serif',serif;transform:scaleX(0.9412);">3558</span>
<span class="t" style="left:302.80px;top:346.00px;font-size:17px;color:#000;font-family:'Liberation Serif',serif;transform:scaleX(0.8786);">TRUE</span>
<div style="left:115px;top:245px;width:1px;height:125px;background:#000;"></div>
<div style="left:204px;top:245px;width:1px;height:125px;background:#000;"></div>
<div style="left:276px;top:245px;width:1px;height:125px;background:#000;"></div>
<div style="left:367px;top:245px;width:1px;height:125px;background:#000;"></div>
<div style="left:29px;top:245px;width:1px;height:125px;background:#9a9a9a;"></div>
<div style="left:28px;top:292px;width:2px;height:25px;background:#217346;"></div>
<div style="left:438px;top:291px;width:75px;height:27px;border:2px solid #217346;"></div>
<div style="left:508px;top:313px;width:7px;height:7px;background:#217346;border:1px solid #fff;"></div>
<svg style="left:218px;top:324px;" width="46" height="46" viewBox="0 0 46 46"><defs><linearGradient id="ba" x1="0" y1="0" x2="0" y2="1"><stop offset="0" stop-color="#6aa6e0"/><stop offset="1" stop-color="#3f86cc"/></linearGradient></defs>
<path d="M0 11H23V0L45.500 23L23 46V35H0Z" fill="url(#ba)"/></svg>
<div style="left:719px;top:275px;width:13px;height:81px;background:#f0f0f0;"></div>
<div style="left:718px;top:226px;width:15px;height:15px;background:#fff;border:1px solid #ababab;"></div>
<svg style="left:722px;top:231px;" width="7" height="4" viewBox="0 0 7 4"><path d="M0 4H7L3.500 0Z" fill="#666"/></svg>
<div style="left:718px;top:241px;width:15px;height:34px;background:#fff;border:1px solid #ababab;"></div>
<div style="left:718px;top:356px;width:15px;height:15px;background:#fff;border:1px solid #ababab;"></div>
<svg style="left:722px;top:362px;" width="7" height="4" viewBox="0 0 7 4"><path d="M0 0H7L3.500 4Z" fill="#666"/></svg>
</main>
<nav id="sheet-tabs">
<div style="left:1px;top:371px;width:735px;height:27px;background:#f5f5f5;"></div>
<svg style="left:28px;top:379px;" width="5" height="9" viewBox="0 0 5 9"><path d="M5 0V9L0 4.500Z" fill="#c2c2c2"/></svg>
<svg style="left:57px;top:379px;" width="5" height="9" viewBox="0 0 5 9"><path d="M0 0V9L5 4.500Z" fill="#217346"/></svg>
<div style="left:101px;top:374px;width:1px;height:20px;background:#b5b5b5;"></div>
<span class="t" style="left:116.60px;top:376.00px;font-size:14px;color:#444;transform:scaleX(0.8977);">consecutive cells</span>
<div style="left:228px;top:374px;width:1px;height:20px;background:#b5b5b5;"></div>
<span class="t" style="left:244.40px;top:376.00px;font-size:14px;color:#444;transform:scaleX(0.9161);">consecutive numbers</span>
<div style="left:382px;top:386px;width:2px;height:2px;background:#217346;"></div>
<div style="left:386px;top:386px;width:2px;height:2px;background:#217346;"></div>
<div style="left:390px;top:386px;width:2px;height:2px;background:#217346;"></div>
<svg style="left:405px;top:375px;" width="18" height="18" viewBox="0 0 18 18"><circle cx="9" cy="9" r="7.500" fill="#f5f5f5" stroke="#777" stroke-width="1.200"/><path d="M5 9H13M9 5V13" stroke="#555" stroke-width="1.600"/></svg>
<div style="left:442px;top:379px;width:2px;height:2px;background:#c2c2c2;"></div>
<div style="left:442px;top:383px;width:2px;height:2px;background:#c2c2c2;"></div>
<div style="left:442px;top:387px;width:2px;height:2px;background:#c2c2c2;"></div>
<div style="left:671px;top:378px;width:29px;height:13px;background:#e9e9e9;"></div>
<div style="left:459px;top:377px;width:15px;height:15px;background:#fff;border:1px solid #ababab;"></div>
<svg style="left:464px;top:381px;" width="4" height="7" viewBox="0 0 4 7"><path d="M4 0V7L0 3.500Z" fill="#666"/></svg>
<div style="left:474px;top:377px;width:197px;height:15px;background:#fff;border:1px solid #ababab;"></div>
<div style="left:700px;top:377px;width:15px;height:15px;background:#fff;border:1px solid #ababab;"></div>
<svg style="left:706px;top:381px;" width="4" height="7" viewBox="0 0 4 7"><path d="M0 0V7L4 3.500Z" fill="#666"/></svg>
</nav>
<footer id="statusbar">
<div style="left:1px;top:398px;width:736px;height:23px;background:#217346;"></div>
<span class="t" style="left:8.50px;top:403.50px;font-size:11px;color:#fff;transform:scaleX(0.8574);">READY</span>
<svg style="left:61px;top:402px;" width="14" height="14" viewBox="0 0 14 14"><rect x="2.500" y="2.500" width="11" height="11" fill="none" stroke="#fff" stroke-width="1.200"/><rect x="2" y="2" width="12" height="3.500" fill="#fff"/>
<circle cx="3.500" cy="3.500" r="3.200" fill="#d8e6dd"/><path d="M5 8H12M5 10.500H12M7.300 6V13M9.800 6V13" stroke="#fff" stroke-width="1"/></svg>
<div style="left:433px;top:398px;width:38px;height:23px;background:#0c6534;"></div>
<svg style="left:445px;top:402px;" width="14" height="14" viewBox="0 0 14 14"><rect x=".5" y=".5" width="12" height="12" fill="none" stroke="#fff" stroke-width="1.200"/><path d="M4.500 .5V12.500M8.500 .5V12.500M.5 4.500H12.500M.5 8.500H12.500" stroke="#fff" stroke-width="1.200"/></svg>
<svg style="left:483px;top:402px;" width="14" height="14" viewBox="0 0 14 14"><rect x=".6" y=".6" width="12.800" height="12.800" fill="none" stroke="#fff" stroke-width="1.200"/><rect x="3.500" y="2.500" width="7" height="9" fill="none" stroke="#fff" stroke-width="1"/><path d="M5 5.500H9M5 7.500H9M5 9.500H9" stroke="#fff" stroke-width="1"/></svg>
<svg style="left:521px;top:402px;" width="14" height="14" viewBox="0 0 14 14"><rect x=".6" y=".6" width="12.800" height="12.800" fill="none" stroke="#fff" stroke-width="1.200"/><path d="M1 1H9V8H1Z" fill="#e6efe9"/><path d="M3.500 1V7M6 1V7" stroke="#217346" stroke-width="1"/><path d="M1 8.500H9.500V1" fill="none" stroke="#fff" stroke-width="1"/></svg>
<div style="left:552px;top:408px;width:6px;height:2px;background:#fff;"></div>
<div style="left:562px;top:409px;width:100px;height:1px;background:#fff;"></div>
<div style="left:610px;top:403px;width:4px;height:11px;background:#fff;"></div>
<div style="left:666px;top:408px;width:8px;height:2px;background:#fff;"></div>
<div style="left:669px;top:405px;width:2px;height:8px;background:#fff;"></div>
<span class="t" style="left:690.50px;top:403.50px;font-size:11px;color:#fff;transform:scaleX(0.9062);">100%</span>
</footer>
</div>
</body></html>
